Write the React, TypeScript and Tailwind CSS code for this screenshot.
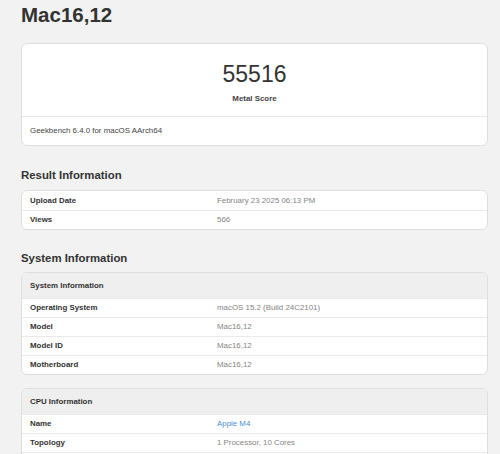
import React from "react";

const font = { fontFamily: '"Liberation Sans", Arial, Helvetica, sans-serif' };

function Row({ label, value, link = false }: { label: string; value: string; link?: boolean }) {
  return (
    <div className="flex h-[19px] items-center border-t border-[#e9e9e9] pl-[8px] text-[7.9px] leading-[10px]">
      <div className="w-[187px] font-bold text-[#333333]">{label}</div>
      <div className={link ? "text-[#4a8fd8]" : "text-[#858585]"}>{value}</div>
    </div>
  );
}

function Header({ title }: { title: string }) {
  return (
    <div className="flex h-[25px] items-center bg-[#efefef] pl-[8px] text-[7.9px] font-bold leading-[10px] text-[#333333]">
      {title}
    </div>
  );
}

export default function App() {
  return (
    <div className="h-[454px] w-[500px] overflow-hidden bg-[#f2f2f2]" style={font}>
      <div className="ml-[21px] w-[467px] pt-[3px]">
        <h1 className="text-[20.5px] font-bold leading-[24px] text-[#333333]">Mac16,12</h1>

        <div className="mt-[16px] overflow-hidden rounded-[6px] border border-[#dedede] bg-white">
          <div className="flex h-[73px] flex-col items-center border-b border-[#e6e6e6] pt-[19px]">
            <div className="text-[23px] leading-[23px] text-[#333333]">55516</div>
            <div className="mt-[8px] text-[7.9px] font-bold leading-[10px] text-[#444444]">Metal Score</div>
          </div>
          <div className="flex h-[28px] items-center pl-[8px] text-[7.9px] leading-[10px] text-[#444444]">
            Geekbench 6.4.0 for macOS AArch64
          </div>
        </div>

        <h2 className="mt-[22px] text-[11.4px] font-bold leading-[14px] text-[#333333]">Result Information</h2>
        <div className="mt-[8px] overflow-hidden rounded-[6px] border border-[#dedede] bg-white [&>div:first-child]:border-t-0">
          <Row label="Upload Date" value="February 23 2025 06:13 PM" />
          <Row label="Views" value="566" />
        </div>

        <h2 className="mt-[21px] text-[11.4px] font-bold leading-[14px] text-[#333333]">System Information</h2>
        <div className="mt-[7px] overflow-hidden rounded-[6px] border border-[#dedede] bg-white">
          <Header title="System Information" />
          <Row label="Operating System" value="macOS 15.2 (Build 24C2101)" />
          <Row label="Model" value="Mac16,12" />
          <Row label="Model ID" value="Mac16,12" />
          <Row label="Motherboard" value="Mac16,12" />
        </div>

        <div className="mt-[13px] overflow-hidden rounded-[6px] border border-[#dedede] bg-white">
          <Header title="CPU Information" />
          <Row label="Name" value="Apple M4" link />
          <Row label="Topology" value="1 Processor, 10 Cores" />
          <div className="h-[19px] border-t border-[#e9e9e9]" />
        </div>
      </div>
    </div>
  );
}
